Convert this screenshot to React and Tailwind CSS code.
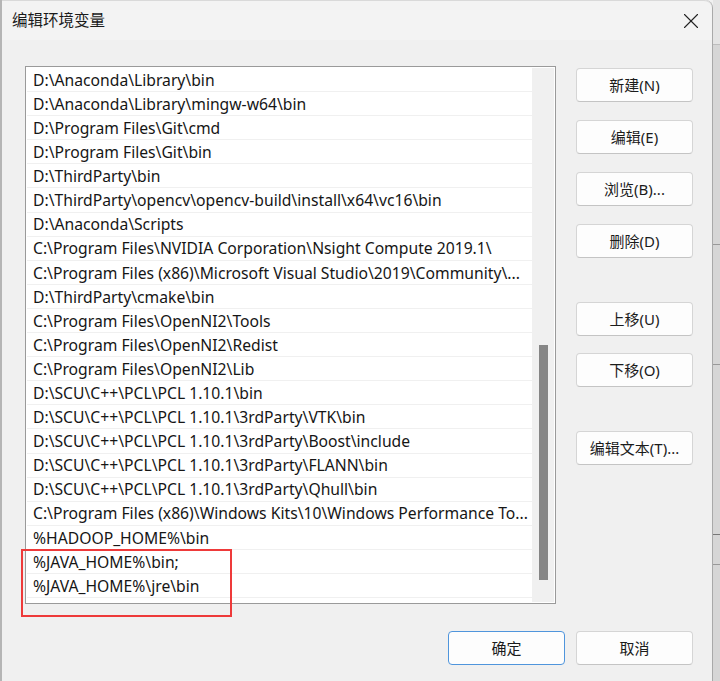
import { X } from 'lucide-react'

const PATHS = [
  'D:\\Anaconda\\Library\\bin',
  'D:\\Anaconda\\Library\\mingw-w64\\bin',
  'D:\\Program Files\\Git\\cmd',
  'D:\\Program Files\\Git\\bin',
  'D:\\ThirdParty\\bin',
  'D:\\ThirdParty\\opencv\\opencv-build\\install\\x64\\vc16\\bin',
  'D:\\Anaconda\\Scripts',
  'C:\\Program Files\\NVIDIA Corporation\\Nsight Compute 2019.1\\',
  'C:\\Program Files (x86)\\Microsoft Visual Studio\\2019\\Community\\...',
  'D:\\ThirdParty\\cmake\\bin',
  'C:\\Program Files\\OpenNI2\\Tools',
  'C:\\Program Files\\OpenNI2\\Redist',
  'C:\\Program Files\\OpenNI2\\Lib',
  'D:\\SCU\\C++\\PCL\\PCL 1.10.1\\bin',
  'D:\\SCU\\C++\\PCL\\PCL 1.10.1\\3rdParty\\VTK\\bin',
  'D:\\SCU\\C++\\PCL\\PCL 1.10.1\\3rdParty\\Boost\\include',
  'D:\\SCU\\C++\\PCL\\PCL 1.10.1\\3rdParty\\FLANN\\bin',
  'D:\\SCU\\C++\\PCL\\PCL 1.10.1\\3rdParty\\Qhull\\bin',
  'C:\\Program Files (x86)\\Windows Kits\\10\\Windows Performance To...',
  '%HADOOP_HOME%\\bin',
  '%JAVA_HOME%\\bin;',
  '%JAVA_HOME%\\jre\\bin',
]

const FONT = "font-['Noto_Sans','Noto_Sans_CJK_SC',sans-serif]"

// 右侧按钮：mt 是和上一个按钮之间的间距
const SIDE_BUTTONS = [
  { label: '新建(N)', mt: 'mt-0' },
  { label: '编辑(E)', mt: 'mt-[18px]' },
  { label: '浏览(B)...', mt: 'mt-[18px]' },
  { label: '删除(D)', mt: 'mt-[18px]' },
  { label: '上移(U)', mt: 'mt-[44px]' },
  { label: '下移(O)', mt: 'mt-[17px]' },
  { label: '编辑文本(T)...', mt: 'mt-[44px]' },
]

function Button({ children, primary, className = '' }) {
  return (
    <button
      className={`h-[34px] w-[117px] rounded-[4px] bg-[#fdfdfd] text-[15px] text-[#1b1b1b] flex items-center justify-center ${
        primary ? 'border border-[#4f95dc]' : 'border border-[#d5d5d5] border-b-[#c4c4c4]'
      } ${className}`}
    >
      {children}
    </button>
  )
}

export default function App() {
  return (
    <div className={`w-[720px] h-[681px] flex bg-[#f0f0f0] overflow-hidden ${FONT}`}>
      {/* 左边背景窗口的一条缝 */}
      <div className="w-[2px] h-full bg-[#b5b5b5] flex-shrink-0" />

      {/* 对话框 */}
      <div className="relative w-[711px] h-full flex-shrink-0 flex flex-col bg-[#f0f0f0] border-r border-[#a9a9a9] rounded-tr-[8px]">
        {/* 标题栏 */}
        <div className="h-[40px] flex items-center justify-between pl-[10px] pr-[8px] bg-[#f3f3f3] rounded-tr-[8px] border-t border-[#d9d9d9] flex-shrink-0">
          <span className="text-[15.5px] text-[#1a1a1a] leading-none">编辑环境变量</span>
          <X size={26} strokeWidth={1} className="text-[#222]" />
        </div>

        <div className="flex pl-[23px] pt-[26px]">
          {/* 列表 */}
          <div className="w-[531px] h-[538px] border border-[#9a9a9a] bg-white flex p-px">
            <div className="flex-1 flex flex-col">
              {PATHS.map((p) => (
                <div
                  key={p}
                  className="h-[24.1px] flex items-center pl-[6px] pt-[2px] border-b border-[#f0f0f0] text-[15.7px] text-[#161616] whitespace-nowrap overflow-hidden flex-shrink-0"
                >
                  {p}
                </div>
              ))}
            </div>
            {/* 滚动条 */}
            <div className="w-[22px] bg-[#f0f0f0] flex flex-col pt-[277px] items-center flex-shrink-0">
              <div className="w-[9px] h-[235px] bg-[#868686]" />
            </div>
          </div>

          {/* 右侧按钮 */}
          <div className="flex flex-col ml-[20px] pt-[2px]">
            {SIDE_BUTTONS.map((b) => (
              <Button key={b.label} className={b.mt}>
                {b.label}
              </Button>
            ))}
          </div>
        </div>

        {/* 底部按钮 */}
        <div className="flex justify-end gap-[11px] pr-[19px] mt-[27px]">
          <Button primary>确定</Button>
          <Button>取消</Button>
        </div>

        {/* 红色标注框 */}
        <div className="absolute left-[19px] top-[549px] w-[211px] h-[68px] border-2 border-[#ee3a3a]" />
      </div>

      {/* 右边背景窗口 */}
      <div className="flex-1 h-full bg-[#d6d6d6] flex flex-col">
        <div className="h-[45px] bg-[#e4e4e4] border-b border-[#bdbdbd]" />
        <div className="h-[200px] border-b border-[#999]" />
        <div className="h-[120px] border-b border-[#999]" />
        <div className="h-[170px] border-b border-[#777]" />
        <div className="h-[30px] border-b border-[#999]" />
      </div>
    </div>
  )
}
